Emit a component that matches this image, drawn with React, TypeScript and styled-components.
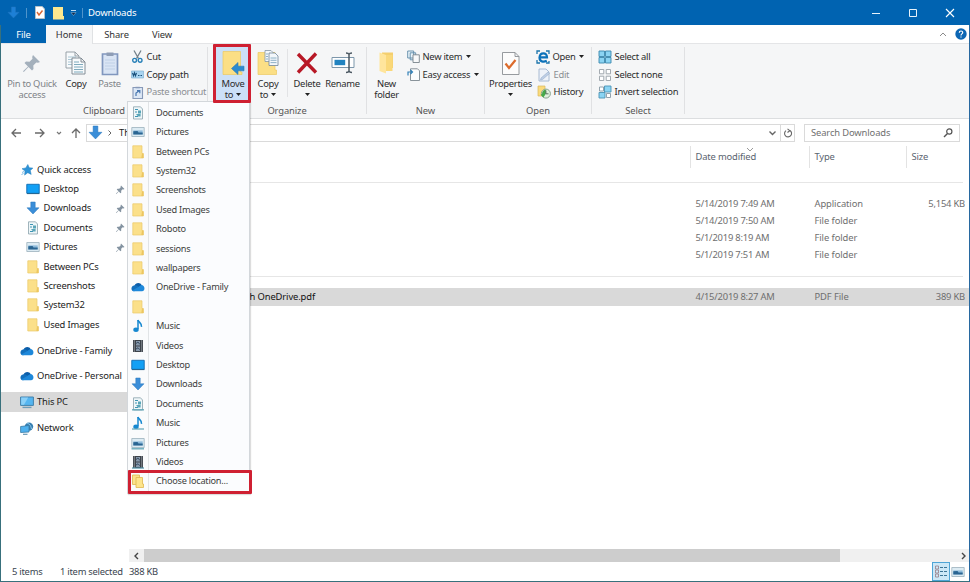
import React from 'react';
import styled, { createGlobalStyle } from 'styled-components';

const Global = createGlobalStyle`
  * { box-sizing: border-box; }
  body { margin: 0; background: #fff; font: 9.4px/12px "Noto Sans", "Open Sans", sans-serif; color: #1c1c1c; overflow: hidden; }
  svg { display: block; flex: none; overflow: visible; }
`;

/* ---------- icons ---------- */

const Svg = ({ w, h, vb, children }: { w: number; h: number; vb?: string; children: React.ReactNode }) => (
  <svg width={w} height={h} viewBox={vb || `0 0 ${w} ${h}`} fill="none">{children}</svg>
);

const Folder = () => (
  <Svg w={14} h={14}>
    <path d="M1.800 .8h9.200v7.700h1.300v4.500H1.800z" fill="#fbe08a" stroke="#ebc968" strokeWidth=".7" />
    <path d="M11 8.500h1.500v4.500h-2.200z" fill="#ecc661" />
  </Svg>
);
const DownArrow = ({ s = 14, c = '#3b8ed8' }: { s?: number; c?: string }) => (
  <Svg w={s} h={s} vb="0 0 14 14"><path d="M4.800 1h4.400v5.800H13L7 13 1 6.800h3.800z" fill={c} stroke="#2676bd" strokeWidth=".5" /></Svg>
);
const Desktop = () => (
  <Svg w={14} h={14}><path d="M.8 2.300h12.400v9H.8z" fill="#12a0f5" stroke="#1673b8" /><path d="M1 11.600h12.400" stroke="#22648f" /></Svg>
);
const Doc = ({ drive = false }: { drive?: boolean }) => (
  <Svg w={14} h={14}>
    <path d="M2.500.8h7L11.500 3v10h-9z" fill="#eef6f8" stroke="#8aa2ac" strokeWidth=".8" />
    <path d="M4 3.500h3M4 6h2M4 10.500h3" stroke="#3d94b4" strokeWidth="1.100" />
    <path d="M7 4.500h3v3H7zM5 8h4.600v2.600H7z" fill="#5aa5b8" />
    {drive && <path d="M1 12.800h12" stroke="#5fa6b7" strokeWidth="1.300" />}
  </Svg>
);
const Picture = ({ drive = false }: { drive?: boolean }) => (
  <Svg w={14} h={14}>
    <path d="M.8 2.500h12.400v9H.8z" fill="#dcebf3" stroke="#9cb1bd" strokeWidth=".8" />
    <path d="M2.300 5.400h9.400v4H2.300z" fill="#8dbada" /><path d="M2.300 6.300 6.500 6l1 1.500h4.200v2H2.300z" fill="#2a6592" />
    {drive && <path d="M.5 12.800h12.500" stroke="#5fa6b7" strokeWidth="1.300" />}
  </Svg>
);
const Music = ({ drive = false }: { drive?: boolean }) => (
  <Svg w={14} h={14}>
    <path d="M7 1v9" stroke="#1688d0" strokeWidth="1.500" />
    <path d="M7 1c.5 2.500 4 3 3.500 6.800" stroke="#1688d0" strokeWidth="1.600" />
    <ellipse cx="5" cy="10.800" rx="2.700" ry="2.200" fill="#1688d0" />
    {drive && <path d="M1 13h12" stroke="#5fa6b7" strokeWidth="1.200" />}
  </Svg>
);
const Video = ({ drive = false }: { drive?: boolean }) => (
  <Svg w={14} h={14}>
    <path d="M2 1h10v12H2z" fill="#3d434a" /><path d="M5 2h4v4.500H5zM5 7.500h4V12H5z" fill="#8798ab" />
    <path d="M5 4.500 7 3l2 2.500M5 10l2-1.200 2 2" stroke="#394d64" />
    <path d="M3.300 1.500v11M10.700 1.500v11" stroke="#d3d8dd" strokeWidth=".9" strokeDasharray="1 1" />
    {drive && <path d="M1 13h12" stroke="#4d8ea4" strokeWidth="1.200" />}
  </Svg>
);
const Cloud = () => (
  <Svg w={14} h={14}>
    <path d="M3.500 5.800C4.500 2.500 9.300 2 10.800 5.400L7 9z" fill="#0b5da9" />
    <path d="M3.200 5.400C5 5 6 5.700 8 7l-4.600 4.200C-.5 11.400-.4 5.800 3.200 5.400z" fill="#1370bd" />
    <path d="M6.500 7.400 10.300 5c3.600-.2 4.600 6.200.6 6.300H3.400c-1 0-1.800-.4-2.200-.9z" fill="#1e88da" />
  </Svg>
);
const Star = () => (
  <Svg w={14} h={14}><path d="m7.800 1.500 1.500 3.300 3.600.3-2.600 2.500.9 3.800-3.400-1.700-3.200 2.400.4-4L2 5.700l3.800-.8z" fill="#2d93d8" stroke="#2780bd" strokeWidth=".5" /><path d="m2 9.500 2-1M1.500 11.500l2-1" stroke="#7dbce6" /></Svg>
);
const Pc = () => (
  <Svg w={14} h={14}><path d="M.6 2h12.800v8.400H.6z" fill="#55b5f0" stroke="#4381ab" /><path d="M1.200 2.600h7L4 9.800H1.200z" fill="#8bd0f7" /><path d="M2.500 12.400h9" stroke="#6e9db9" strokeWidth="1.400" /></Svg>
);
const Network = () => (
  <Svg w={14} h={14}><circle cx="9" cy="5.600" r="4.200" fill="#377fb0" /><path d="M7 2c3 1 4 3 4.500 6" stroke="#8ac5e9" /><path d="M.6 5.500 9 4.500V11L.6 11.500z" fill="#4fb1ee" stroke="#3778a3" strokeWidth=".8" /><path d="M3 13.300h4.500" stroke="#6798b5" strokeWidth="1.200" /></Svg>
);
const Choose = () => (
  <Svg w={14} h={14}><path d="M1.500 1h7v9.500h-7z" fill="#fbe28c" stroke="#dfb84f" strokeWidth=".8" /><path d="M5 3.500h6.500V10h1v3.500H5z" fill="#fde48a" stroke="#dfb84f" strokeWidth=".8" /></Svg>
);
const Pin = ({ s = 9 }: { s?: number }) => (
  <Svg w={s} h={s} vb="0 0 18 18"><path d="m10 1 7 7-2 .8-1.700-.3-3 3 .2 3.500-1.500 1.500-3.500-3.500L.8 18 0 17.200 5 12.500 1.500 9 3 7.500l3.500.2 3-3L9.200 3z" fill={s > 10 ? '#a4b0bc' : '#8493a1'} /></Svg>
);
const CopyI = () => (
  <Svg w={22} h={25}>
    <path d="M1 1h9l4 4v12H1zM10 1v4h4" fill="#f7fafc" stroke="#8e989f" strokeWidth=".9" />
    <path d="M3 6h8M3 8.500h8M3 11h8M3 13.500h6" stroke="#a9c6d4" />
    <path d="M7 7h9l4 4v12H7zM16 7v4h4" fill="#f7fafc" stroke="#78858d" strokeWidth=".9" />
    <path d="M9 11h5M9 13.500h9M9 16h9M9 18.500h9M9 21h9" stroke="#7faabd" />
  </Svg>
);
const PasteI = () => (
  <Svg w={18} h={25}>
    <path d="M1.500 3h15v20.500h-15z" fill="#d9e4f4" stroke="#8197be" strokeWidth="1.700" />
    <path d="M5.500 1.500h7V5h-7z" fill="#8e9db5" /><path d="M4 9h10M4 12h10M4 15h10M4 18h10" stroke="#bfd0e6" />
  </Svg>
);
const MoveI = () => (
  <Svg w={24} h={26}>
    <path d="M2 1.500h17.500v20.500H21v2.500H2z" fill="#fbdf85" stroke="#edc862" strokeWidth=".7" />
    <path d="M10.500 18.500 17 12.500v3.700h6v4.600h-6v3.700z" fill="#2c8bd0" stroke="#287ab6" strokeWidth=".6" />
  </Svg>
);
const CopyToI = () => (
  <Svg w={24} h={26}>
    <path d="M2 2.500h17v17.500h1.500v4.500H2z" fill="#fbdf85" stroke="#edc862" strokeWidth=".7" />
    <path d="M9 .5h6l2 2v9H9z" fill="#f3f7fa" stroke="#8597a6" strokeWidth=".8" />
    <path d="M13 3h6l3 3v9.500h-9z" fill="#f3f7fa" stroke="#70879b" strokeWidth=".8" />
    <path d="M14.500 8h6M14.500 10.300h6M14.500 12.600h6M10 4h2M10 6.500h2M10 9h2" stroke="#82a9c2" strokeWidth=".9" />
  </Svg>
);
const DeleteI = () => (
  <Svg w={22} h={22}><path d="M2 2 20 20.500M20 1.500 2 20.500" stroke="#b81826" strokeWidth="3.400" /></Svg>
);
const RenameI = () => (
  <Svg w={24} h={22}>
    <path d="M1 5.500h22v10H1z" fill="#fff" stroke="#7d97ab" /><path d="M3.500 7.800h10.700v5.400H3.500z" fill="#2183c0" />
    <path d="M15 .9c1.500 0 2.700.5 3 1.500.3-1 1.500-1.500 3-1.500M18 2v18M15 20.500c1.500 0 2.700-.5 3-1.500.3 1 1.500 1.500 3 1.500" stroke="#4b5862" strokeWidth="1.500" />
  </Svg>
);
const NewFolderI = () => (
  <Svg w={18} h={24}><path d="M4 1.500h11V17H4z" fill="#f4cf6e" /><path d="M1.500 1.500 8 4v18.500L1.500 20z" fill="#ffe59c" /><path d="M8 4h6.500v16H8z" fill="#fad879" /></Svg>
);
const PropertiesI = () => (
  <Svg w={20} h={25}><path d="M1.500 1.500H14l4 4v18h-16.500zM14 1.500v4h4" fill="#fcfcfc" stroke="#8b9094" strokeWidth=".9" /><path d="m4.500 12.500 3.500 4.500 6.500-8" stroke="#dc6b2c" strokeWidth="2.200" /></Svg>
);
const Cut = () => (
  <Svg w={13} h={13}><path d="m3 .5 4.500 8M10 .5l-4.500 8" stroke="#74818a" strokeWidth="1.300" /><circle cx="3.600" cy="10.300" r="1.900" stroke="#2880b8" strokeWidth="1.400" /><circle cx="9.100" cy="10.300" r="1.900" stroke="#2880b8" strokeWidth="1.400" /></Svg>
);
const CopyPath = () => (
  <Svg w={13} h={13}><path d="M.5 3h12v7H.5z" fill="#a9d4f0" stroke="#82b3d2" strokeWidth=".7" /><path d="m1.500 4.800 1 3 1-3 1 3 1-3M7 7.500h1.500M9.500 7.500H11" stroke="#1c527c" strokeWidth="1.100" /></Svg>
);
const PasteShortcut = () => (
  <Svg w={13} h={13}><path d="M2 1.500h9.500v11H2z" fill="#dce7f5" stroke="#8799b8" strokeWidth="1.100" /><path d="M4.500.8h4.300v1.500H4.500z" fill="#8799b8" /><path d="M5 10V7l3-2M6 4.700h2.800v2.600" stroke="#4877b0" strokeWidth="1.200" /></Svg>
);
const NewItem = () => (
  <Svg w={13} h={13}><path d="M.7 1h6v7h-6zM3.200 2.800h5.500v7H3.200z" fill="#e9f4fa" stroke="#5e8aa8" strokeWidth=".9" /><path d="M6 4.800h6.300v7.700H6z" fill="#f8f9fa" stroke="#79848c" strokeWidth=".9" /></Svg>
);
const EasyAccess = () => (
  <Svg w={13} h={13}><path d="M3.500.8h7l2 2v9.700h-9z" fill="#fbfcfd" stroke="#7c878e" strokeWidth=".9" /><path d="M1 7.500V4h3.500M3.500 2 5.500 4l-2 2" stroke="#3281b8" strokeWidth="1.200" /></Svg>
);
const OpenI = () => (
  <Svg w={14} h={14}><path d="M4 1H1v3M1 10v3h3M10 1h3v3M10 13h3v-2" stroke="#1c75ac" strokeWidth="1.300" /><path d="M4 7.300h7C11 2 4 2 3.500 7.500c0 4.300 4 5 7.300 3.300" stroke="#0c72ba" strokeWidth="2.200" /></Svg>
);
const EditI = () => (
  <Svg w={14} h={14}><path d="M2 1h7l3 3v9H2z" fill="#eef2f9" stroke="#a0b4ce" strokeWidth=".9" /><path d="m4 10 7-6 1.500 1.500-7 6L3.500 12z" fill="#bfcfe6" stroke="#8ca4c5" strokeWidth=".5" /></Svg>
);
const HistoryI = () => (
  <Svg w={14} h={14}><path d="M1 1h7v10H1z" fill="#fadb7c" stroke="#d8b75b" strokeWidth=".7" /><circle cx="8.900" cy="8.600" r="4.500" fill="#dff0dc" stroke="#7e9a86" strokeWidth=".9" /><path d="M8.900 8.600V4.800a3.800 3.800 0 0 0-3.800 4.500l-1.600.2 2.800 3 2.400-3.600z" fill="#46a94a" /><path d="M8.900 5.500v3.300h2.600" stroke="#5a6f60" /></Svg>
);
const SelectAll = () => (
  <Svg w={14} h={14}><path d="M1 1h5.500v5.500H1zM7.500 1H13v5.500H7.500zM1 7.500h5.500V13H1zM7.500 7.500H13V13H7.500z" fill="#8bd4f3" stroke="#3b88ae" strokeWidth=".9" /></Svg>
);
const SelectNone = () => (
  <Svg w={14} h={14}><path d="M1.500 1.500H5.800V5.800H1.500zM8.200 1.500h4.300V5.800H8.200zM1.500 8.200h4.300v4.300H1.500zM8.200 8.200h4.300v4.300H8.200z" fill="#fff" stroke="#98a0a7" strokeWidth=".9" /></Svg>
);
const InvertSel = () => (
  <Svg w={14} h={14}><path d="M1.500 2h4v4h-4zM8.500 8.500h4v4h-4z" fill="#fff" stroke="#8798a4" strokeWidth=".9" /><path d="M6.500 1H13v6H6.500zM1 7.500h6V13H1z" fill="#8bd4f3" stroke="#4b93b5" strokeWidth=".9" /></Svg>
);
const Caret = () => <Svg w={5} h={3}><path d="M0 0h5L2.500 3z" fill="#222" /></Svg>;
const Arrow = ({ d }: { d: string }) => <Svg w={12} h={12}><path d={d} stroke="#6a6a6a" strokeWidth="1.300" /></Svg>;

/* ---------- shell ---------- */

const Win = styled.div`
  position: relative; width: 970px; height: 582px; display: flex; flex-direction: column; background: #fff;
  border: solid; border-width: 0 1px 1px; border-color: #2d6c9c #2768a0 #38707c #38707c;
`;
const TitleBar = styled.div`
  height: 25px; margin: 0 -1px; padding-left: 7px; background: #0063b1; color: #fff; display: flex; align-items: center;
`;
const Quick = styled.div<{ $w: number }>`width: ${p => p.$w}px; display: flex; justify-content: center;`;
const Tick = styled.div`width: 1px; height: 10px; background: #4f94cb;`;
const Title = styled.div`flex: 1; font-size: 9.6px; letter-spacing: -.22px;`;
const Controls = styled.div`display: flex; gap: 25px; padding-right: 14px;`;

const Tabs = styled.div`height: 19px; display: flex; align-items: stretch; border-bottom: 1px solid #e4e5e7;`;
const Tab = styled.div<{ $w: number; $kind?: 'file' | 'active' }>`
  width: ${p => p.$w}px; display: flex; align-items: center; justify-content: center; padding-top: 1px; letter-spacing: -.1px;
  margin-bottom: ${p => (p.$kind === 'active' ? '-1px' : 0)};
  background: ${p => (p.$kind === 'file' ? '#0063b1' : p.$kind === 'active' ? '#f5f6f7' : '#fff')};
  color: ${p => (p.$kind === 'file' ? '#fff' : '#333')};
  border-right: ${p => (p.$kind === 'active' ? '1px solid #e0e2e4' : 0)};
`;
const TabEnd = styled.div`margin-left: auto; display: flex; align-items: center; gap: 8px; padding-right: 2px;`;

const Ribbon = styled.div`
  height: 75px; display: flex; background: #f5f6f7; border-bottom: 1px solid #dcdee0; color: #333; letter-spacing: -.27px;
`;
const Group = styled.div<{ $w: number }>`
  width: ${p => p.$w}px; display: grid; grid-template-rows: 58px 16px;
  background: linear-gradient(#e0e1e3, #e0e1e3) right 3px / 1px 67px no-repeat;
`;
const GroupBody = styled.div<{ $pad?: number }>`display: flex; padding-left: ${p => p.$pad || 0}px;`;
const GroupName = styled.div`text-align: center; color: #555; padding: 3px 1px 0 0; line-height: 12px; white-space: nowrap; letter-spacing: -.1px;`;
const Big = styled.div<{ $w: number; $dim?: boolean; $on?: boolean }>`
  width: ${p => p.$w}px; display: flex; flex-direction: column; align-items: center; white-space: nowrap; flex: none;
  text-align: center; line-height: 11px; color: ${p => (p.$dim ? '#808488' : '#2c2c2c')};
  background: ${p => (p.$on ? '#cce0f7' : 'transparent')};
`;
const BigIcon = styled.div`height: 34px; padding-top: 4px; display: flex; align-items: center; justify-content: center;`;
const Inline = styled.span`display: flex; align-items: center; justify-content: center; gap: 3px; height: 11px;`;
const SmallCol = styled.div<{ $ml?: number }>`display: flex; flex-direction: column; padding-top: 4px; margin-left: ${p => p.$ml || 0}px;`;
const Small = styled.div<{ $dim?: boolean }>`
  height: 17.700px; display: flex; align-items: center; gap: 2.500px; white-space: nowrap; color: ${p => (p.$dim ? '#8b8f93' : '#2c2c2c')};
  > svg + svg, > svg:last-child { margin-left: 1px; }
`;
const Divider = styled.div`width: 1px; height: 48px; margin: 5px 1px 0; background: #e2e3e5;`;

const AddressRow = styled.div`height: 27px; display: flex; align-items: center; padding-left: 9px; flex: none;`;
const NavIcon = styled.div<{ $w: number }>`width: ${p => p.$w}px; display: flex; justify-content: flex-start;`;
const Address = styled.div`
  width: 709px; height: 18px; border: 1px solid #dadada; display: flex; align-items: center; padding-left: 1px; gap: 4px;
`;
const Refresh = styled.div`width: 14px; height: 16px; border-left: 1px solid #dadada; display: flex; align-items: center; justify-content: center;`;
const Spacer = styled.div`flex: 1;`;
const Search = styled.div`
  width: 156px; height: 18px; margin-left: 9px; border: 1px solid #dadada; padding: 0 6px; display: flex; align-items: center;
  justify-content: space-between; color: #707070; letter-spacing: -.12px;
`;

const Body = styled.div`flex: 1; display: flex; min-height: 0;`;
const Sidebar = styled.div`width: 126px; padding-top: 14px; flex: none; letter-spacing: -.17px;`;
const SideItem = styled.div<{ $depth?: boolean; $gap?: boolean; $on?: boolean }>`
  height: 19.400px; margin-top: ${p => (p.$gap ? 6.400 : 0)}px; display: flex; align-items: center; gap: 3.500px; white-space: nowrap;
  padding: 0 2px 0 ${p => (p.$depth ? 25 : 18.500)}px; background: ${p => (p.$on ? '#d9d9d9' : 'transparent')};
  > span { flex: 1; }
`;
const Main = styled.div`flex: 1; display: flex; flex-direction: column; padding-left: 2px;`;
const COLS = '561px 119px 97px 1fr';
const Head = styled.div`display: grid; grid-template-columns: ${COLS}; height: 22px; color: #5a6470; letter-spacing: -.15px;`;
const HeadCell = styled.div<{ $line?: boolean }>`
  padding: 5px 0 0 4.500px; border-left: ${p => (p.$line ? '1px solid #e3e3e3' : 0)}; position: relative;
  > svg { position: absolute; left: 55px; top: 1px; }
`;
const GroupRule = styled.div<{ $top: number; $bottom: number }>`
  height: 1px; margin: ${p => p.$top}px 6px ${p => p.$bottom}px 0; background: #e6e6e6;
`;
const FileRow = styled.div<{ $on?: boolean }>`
  display: grid; grid-template-columns: ${COLS}; height: ${p => (p.$on ? 18 : 17)}px; align-items: center; color: #6f6f6f;
  background: ${p => (p.$on ? '#d9d9d9' : 'transparent')}; white-space: nowrap;
`;
const Name = styled.div`color: #111; width: 186px; display: flex; justify-content: flex-end; letter-spacing: -.12px;`;
const Cell = styled.div<{ $right?: boolean; $tight?: boolean }>`
  padding: 0 4px 0 5.500px; text-align: ${p => (p.$right ? 'right' : 'left')}; letter-spacing: ${p => (p.$tight ? -.2 : -.08)}px;
`;
const Scroll = styled.div`margin-top: auto; height: 13px; background: #f0f0f0; display: flex; align-items: center; justify-content: space-between; padding: 0 3px 0 5px;`;
const Thumb = styled.div`width: 696px; height: 13px; background: #cdcdcd; margin: 0 auto 0 5px;`;
const Status = styled.div`height: 19px; display: flex; align-items: center; padding: 0 4px 0 11px; color: #3b4550; letter-spacing: -.25px;`;
const StatusText = styled.div<{ $w: number }>`width: ${p => p.$w}px; white-space: nowrap;`;
const ViewButton = styled.div`
  width: 18px; height: 19px; margin-right: 1px; border: 1px solid #4fa5d6; background: #cce8f7; display: flex; align-items: center; justify-content: center;
`;

/* ---------- overlays ---------- */

const Menu = styled.div`
  position: absolute; left: 126px; top: 101px; width: 123px; padding-top: 1px; height: 393px; border: 1px solid #d3d7db;
  background: linear-gradient(90deg, #fafbfc 20px, #e1e4e6 20px, #e1e4e6 21px, #fbfcfe 21px); color: #3c3c3c;
  box-shadow: 1px 1px 1px #0002;
`;
const MenuItem = styled.div`
  height: 19.420px; display: flex; align-items: center; gap: 11px; padding-left: 3px; white-space: nowrap;
  font-size: 9.200px; letter-spacing: -.25px;
`;
const Highlight = styled.div<{ $x: number; $y: number; $w: number; $h: number }>`
  position: absolute; left: ${p => p.$x - 1}px; top: ${p => p.$y}px; width: ${p => p.$w}px; height: ${p => p.$h}px;
  border: 3px solid #cf2032; border-radius: 1px;
`;

/* ---------- data ---------- */

type Entry = [React.ReactNode, string];
const menu: Entry[] = [
  [<Doc />, 'Documents'], [<Picture />, 'Pictures'], [<Folder />, 'Between PCs'], [<Folder />, 'System32'],
  [<Folder />, 'Screenshots'], [<Folder />, 'Used Images'], [<Folder />, 'Roboto'], [<Folder />, 'sessions'],
  [<Folder />, 'wallpapers'], [<Cloud />, 'OneDrive - Family'], [<Folder />, ''], [<Music />, 'Music'], [<Video />, 'Videos'],
  [<Desktop />, 'Desktop'], [<DownArrow />, 'Downloads'], [<Doc drive />, 'Documents'], [<Music drive />, 'Music'],
  [<Picture drive />, 'Pictures'], [<Video drive />, 'Videos'], [<Choose />, 'Choose location...'],
];
const pinned: Entry[] = [[<Desktop />, 'Desktop'], [<DownArrow />, 'Downloads'], [<Doc />, 'Documents'], [<Picture />, 'Pictures']];
const recent = ['Between PCs', 'Screenshots', 'System32', 'Used Images'];
const roots: Entry[] = [[<Cloud />, 'OneDrive - Family'], [<Cloud />, 'OneDrive - Personal'], [<Pc />, 'This PC'], [<Network />, 'Network']];
const files = [
  ['5/14/2019 7:49 AM', 'Application', '5,154 KB'], ['5/14/2019 7:50 AM', 'File folder', ''],
  ['5/1/2019 8:19 AM', 'File folder', ''], ['5/1/2019 7:51 AM', 'File folder', ''],
];

const BigButton = ({ icon, w, lines, caret, dim, on }: { icon: React.ReactNode; w: number; lines: string[]; caret?: boolean; dim?: boolean; on?: boolean }) => (
  <Big $w={w} $dim={dim} $on={on}>
    <BigIcon>{icon}</BigIcon>
    {lines.map((l, i) => <Inline key={l}>{l}{caret && i === 1 && <Caret />}</Inline>)}
    {caret && lines.length === 1 && <Inline><Caret /></Inline>}
  </Big>
);

export default function App() {
  return (
    <>
      <Global />
      <Win>
        <TitleBar>
          <Quick $w={13}><DownArrow s={13} c="#1d80d6" /></Quick>
          <Quick $w={13}><Tick /></Quick>
          <Quick $w={14}><Svg w={10} h={13}><path d="M.5.5h6.800L9.500 3v9.500h-9z" fill="#fff" stroke="#b6c1c9" /><path d="m2 6 2 3 3.500-4.500" stroke="#d96634" strokeWidth="1.400" /></Svg></Quick>
          <Quick $w={22}><Svg w={11} h={14}><path d="M0 1h10v9h1v3.500H0z" fill="#fde88f" /></Svg></Quick>
          <Quick $w={8}><Svg w={5} h={6}><path d="M0 .5h5" stroke="#bfdcf2" /><path d="M0 2.500h5L2.500 5.500z" fill="#102a4c" stroke="#bfdcf2" strokeWidth=".4" /></Svg></Quick>
          <Quick $w={11}><Tick /></Quick>
          <Title>Downloads</Title>
          <Controls>
            <Svg w={12} h={12}><path d="M2 6.500h8" stroke="#e8f2fa" /></Svg>
            <Svg w={12} h={12}><path d="M2.500 2.500h7v7h-7z" stroke="#e8f2fa" /></Svg>
            <Svg w={12} h={12}><path d="m2 2 8 8M10 2l-8 8" stroke="#fff" strokeWidth="1.100" /></Svg>
          </Controls>
        </TitleBar>

        <Tabs>
          <Tab $w={45} $kind="file">File</Tab>
          <Tab $w={47} $kind="active">Home</Tab>
          <Tab $w={47}>Share</Tab>
          <Tab $w={44}>View</Tab>
          <TabEnd>
            <Svg w={8} h={5}><path d="m1 4 3-3 3 3" stroke="#8b8b8b" /></Svg>
            <Svg w={12} h={12}><circle cx="6" cy="6" r="5.700" fill="#0c66b4" /><path d="M4.300 4.700c0-2.300 3.400-2.200 3.400-.2C7.700 6 6 5.800 6 7.400M6 8.400v1.200" stroke="#fff" strokeWidth="1.200" /></Svg>
          </TabEnd>
        </Tabs>

        <Ribbon>
          <Group $w={207}>
            <GroupBody>
              <BigButton icon={<Pin s={18} />} w={62} lines={['Pin to Quick', 'access']} dim />
              <BigButton icon={<CopyI />} w={26} lines={['Copy']} />
              <BigButton icon={<PasteI />} w={41} lines={['Paste']} dim />
              <SmallCol>
                <Small><Cut />Cut</Small>
                <Small><CopyPath />Copy path</Small>
                <Small $dim><PasteShortcut />Paste shortcut</Small>
              </SmallCol>
            </GroupBody>
            <GroupName>Clipboard</GroupName>
          </Group>
          <Group $w={159}>
            <GroupBody $pad={8}>
              <BigButton icon={<MoveI />} w={34} lines={['Move', 'to']} caret on />
              <BigButton icon={<CopyToI />} w={36} lines={['Copy', 'to']} caret />
              <Divider />
              <BigButton icon={<DeleteI />} w={36} lines={['Delete']} caret />
              <BigButton icon={<RenameI />} w={35} lines={['Rename']} />
            </GroupBody>
            <GroupName>Organize</GroupName>
          </Group>
          <Group $w={118}>
            <GroupBody $pad={1}>
              <BigButton icon={<NewFolderI />} w={37} lines={['New', 'folder']} />
              <SmallCol $ml={2}>
                <Small><NewItem />New item<Caret /></Small>
                <Small><EasyAccess />Easy access<Caret /></Small>
              </SmallCol>
            </GroupBody>
            <GroupName>New</GroupName>
          </Group>
          <Group $w={107}>
            <GroupBody>
              <BigButton icon={<PropertiesI />} w={51} lines={['Properties']} caret />
              <SmallCol>
                <Small><OpenI />Open<Caret /></Small>
                <Small $dim><EditI />Edit</Small>
                <Small><HistoryI />History</Small>
              </SmallCol>
            </GroupBody>
            <GroupName>Open</GroupName>
          </Group>
          <Group $w={93}>
            <GroupBody>
              <SmallCol $ml={5}>
                <Small><SelectAll />Select all</Small>
                <Small><SelectNone />Select none</Small>
                <Small><InvertSel />Invert selection</Small>
              </SmallCol>
            </GroupBody>
            <GroupName>Select</GroupName>
          </Group>
        </Ribbon>

        <AddressRow>
          <NavIcon $w={24}><Arrow d="M11 6H2M6 2 2 6l4 4" /></NavIcon>
          <NavIcon $w={22}><Arrow d="M1 6h9M6 2l4 4-4 4" /></NavIcon>
          <NavIcon $w={14}><Svg w={6} h={6}><path d="m1 2 2 2 2-2" stroke="#777" strokeWidth="1.200" /></Svg></NavIcon>
          <NavIcon $w={16}><Arrow d="M6 11V2M2 6l4-4 4 4" /></NavIcon>
          <Address>
            <DownArrow s={15} />
            <Svg w={8} h={8}><path d="m1.500 1.500 2.500 2.500-2.500 2.500" stroke="#666" /></Svg>
            <span>This PC</span>
            <Spacer />
            <Svg w={8} h={6}><path d="m1.500 1.500 3 3 3-3" stroke="#666" strokeWidth="1.400" /></Svg>
            <Refresh><Svg w={10} h={10}><path d="M7 2.500A3.500 3.500 0 1 1 3 2.600M4.500.8 6.800 2.700 4.500 4.500" stroke="#666" strokeWidth="1.100" /></Svg></Refresh>
          </Address>
          <Search>Search Downloads<Svg w={10} h={10}><circle cx="6.300" cy="3.500" r="2.600" stroke="#555" strokeWidth="1.200" /><path d="M4.500 5.500 1 9" stroke="#555" strokeWidth="1.400" /></Svg></Search>
        </AddressRow>

        <Body>
          <Sidebar>
            <SideItem><Star /><span>Quick access</span></SideItem>
            {pinned.map(([icon, t]) => <SideItem key={t} $depth>{icon}<span>{t}</span><Pin /></SideItem>)}
            {recent.map(t => <SideItem key={t} $depth><Folder /><span>{t}</span></SideItem>)}
            {roots.map(([icon, t]) => <SideItem key={t} $gap $on={t === 'This PC'}>{icon}<span>{t}</span></SideItem>)}
          </Sidebar>
          <Main>
            <Head>
              <HeadCell />
              <HeadCell $line>Date modified<Svg w={8} h={5}><path d="m1 1 3 3 3-3" stroke="#999" /></Svg></HeadCell>
              <HeadCell $line>Type</HeadCell>
              <HeadCell $line>Size</HeadCell>
            </Head>
            <GroupRule $top={14} $bottom={12} />
            {files.map(([d, t, s]) => (
              <FileRow key={d}><Name /><Cell $tight>{d}</Cell><Cell>{t}</Cell><Cell $right $tight>{s}</Cell></FileRow>
            ))}
            <GroupRule $top={13} $bottom={11} />
            <FileRow $on><Name>with OneDrive.pdf</Name><Cell $tight>4/15/2019 8:27 AM</Cell><Cell>PDF File</Cell><Cell $right $tight>389 KB</Cell></FileRow>
            <Scroll>
              <Svg w={5} h={8}><path d="M4 1 1 4l3 3" stroke="#444" strokeWidth="1.400" /></Svg>
              <Thumb />
              <Svg w={5} h={8}><path d="m1 1 3 3-3 3" stroke="#444" strokeWidth="1.400" /></Svg>
            </Scroll>
          </Main>
        </Body>

        <Status>
          <StatusText $w={48}>5 items</StatusText>
          <StatusText $w={69}>1 item selected</StatusText>
          <StatusText $w={60}>388 KB</StatusText>
          <Spacer />
          <ViewButton><Svg w={14} h={13}><path d="M1.500 1h3v3h-3zM1.500 5h3v3h-3zM1.500 9h3v3h-3z" stroke="#987c85" strokeWidth=".8" /><path d="M6 2.500h3M10 2.500h3M6 6.500h3M10 6.500h3M6 10.500h3M10 10.500h3" stroke="#3c7496" /></Svg></ViewButton>
          <Picture />
        </Status>

        <Menu>{menu.map(([icon, t], i) => <MenuItem key={i}>{icon}{t}</MenuItem>)}</Menu>
        <Highlight $x={213} $y={44} $w={38} $h={59} />
        <Highlight $x={128} $y={470} $w={124} $h={24} />
      </Win>
    </>
  );
}
